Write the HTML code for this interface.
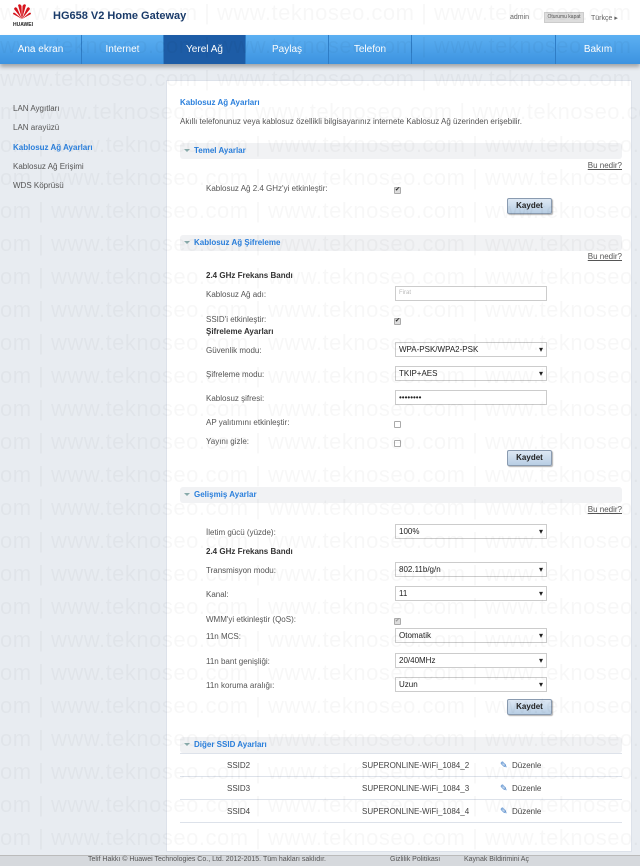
<!DOCTYPE html><html><head><meta charset="utf-8"><style>
*{margin:0;padding:0;box-sizing:border-box}
html{width:640px;height:866px;overflow:hidden}
body{width:640px;height:866px;overflow:hidden;background:#e8ecf1;font-family:"Liberation Sans",sans-serif;font-size:8px;color:#444;position:relative}
.a{position:absolute;white-space:nowrap}
.wm{position:absolute;left:0;width:640px;font-size:22px;color:rgba(0,0,0,0.03);white-space:nowrap;letter-spacing:0.5px;z-index:50;pointer-events:none;overflow:hidden}
.nav{position:absolute;top:35px;left:0;width:640px;height:29px;background:linear-gradient(#5cb0f2,#3c93e0);box-shadow:0 3px 4px rgba(0,0,0,0.3)}
.nav div{position:absolute;top:0;height:29px;line-height:29px;text-align:center;color:#fff;font-size:10px;border-right:1px solid #2f7dc6}
.side{color:#555;font-size:8px}
.sec{position:absolute;left:180px;width:442px;height:16px;background:#f1f2f4;border-radius:3px;color:#2a7fdc;font-weight:bold;font-size:8px;line-height:16px;padding-left:4px}
.sec:before{content:"";display:inline-block;border-left:3px solid transparent;border-right:3px solid transparent;border-top:3px solid #8aa;margin-right:4px;vertical-align:1px}
.bn{position:absolute;right:18px;color:#555;text-decoration:underline;font-size:8px}
.lbl{position:absolute;left:206px;color:#555}
.b{position:absolute;left:206px;color:#333;font-weight:bold}
.cb{position:absolute;left:394px;width:7px;height:7px;background:#ddd;border:1px solid #aaa;border-radius:1px;font-size:6px;line-height:5px;text-align:center;color:#222}
.inp{position:absolute;left:395px;width:152px;height:15px;border:1px solid #ccc;background:#fff;font-size:8px;line-height:13px;padding-left:3px;color:#222}
.sel:after{content:"▾";position:absolute;right:3px;font-size:8px}
.btn{position:absolute;left:507px;width:45px;height:16px;background:linear-gradient(#dde8f4,#b8cee4);border:1px solid #8a9bb0;border-radius:2px;font-weight:bold;color:#222;font-size:8px;line-height:14px;text-align:center;box-shadow:1px 1px 1px rgba(0,0,0,0.3)}
.ln{position:absolute;left:180px;width:442px;height:1px;background:#dde2ea}
</style></head><body>
<div style="position:absolute;top:0;left:0;width:640px;height:35px;background:#fff"></div>
<svg class="a" style="left:12px;top:3px" width="20" height="18" viewBox="0 0 20 18"><g fill="#d8141c"><path d="M10 16 L6 2 Q8 0 9.5 3Z"/><path d="M10 16 L14 2 Q12 0 10.5 3Z"/><path d="M10 16 L2 6 Q3 3 5 5Z"/><path d="M10 16 L18 6 Q17 3 15 5Z"/><path d="M10 16 L1 11 Q1 9 3 10Z"/><path d="M10 16 L19 11 Q19 9 17 10Z"/></g></svg>
<div class="a" style="left:13px;top:22px;font-size:5px;font-weight:bold;color:#222">HUAWEI</div>
<div class="a" style="left:53px;top:10px;font-size:11px;font-weight:bold;color:#1a3b6a">HG658 V2 Home Gateway</div>
<div class="a" style="left:510px;top:14px;font-size:7px;color:#666">admin</div>
<div class="a" style="left:544px;top:12px;width:40px;height:11px;background:#ddd;border:1px solid #ccc;font-size:5px;line-height:9px;text-align:center;color:#555">Oturumu kapat</div>
<div class="a" style="left:591px;top:14px;font-size:7px;color:#666">Türkçe ▸</div>
<div class="nav">
<div style="left:0;width:82px">Ana ekran</div>
<div style="left:82px;width:82px">Internet</div>
<div style="left:164px;width:82px;background:#1d5ca6">Yerel Ağ</div>
<div style="left:246px;width:83px">Paylaş</div>
<div style="left:329px;width:83px">Telefon</div>
<div style="left:412px;width:144px"></div>
<div style="left:556px;width:84px;border:none">Bakım</div>
</div>
<div class="a side" style="left:13px;top:104px">LAN Aygıtları</div>
<div class="a side" style="left:13px;top:123px">LAN arayüzü</div>
<div class="a side" style="left:13px;top:143px;color:#2a7fdc;font-weight:bold">Kablosuz Ağ Ayarları</div>
<div class="a side" style="left:13px;top:162px">Kablosuz Ağ Erişimi</div>
<div class="a side" style="left:13px;top:181px">WDS Köprüsü</div>
<div style="position:absolute;left:166px;top:80px;width:466px;height:772px;background:#fff;border:1px solid #dde2ea"></div>
<div class="a" style="left:180px;top:98px;color:#2a7fdc;font-weight:bold">Kablosuz Ağ Ayarları</div>
<div class="a" style="left:180px;top:117px;color:#555">Akıllı telefonunuz veya kablosuz özellikli bilgisayarınız internete Kablosuz Ağ üzerinden erişebilir.</div>
<div class="sec" style="top:143px">Temel Ayarlar</div>
<div class="a bn" style="top:161px">Bu nedir?</div>
<div class="lbl" style="top:184px">Kablosuz Ağ 2.4 GHz'yi etkinleştir:</div>
<div class="cb" style="top:187px">✔</div>
<div class="btn" style="top:198px">Kaydet</div>
<div class="sec" style="top:235px">Kablosuz Ağ Şifreleme</div>
<div class="a bn" style="top:252px">Bu nedir?</div>
<div class="b" style="top:271px">2.4 GHz Frekans Bandı</div>
<div class="lbl" style="top:290px">Kablosuz Ağ adı:</div>
<div class="inp" style="top:286px;color:#bbb;font-size:6px">Firat</div>
<div class="lbl" style="top:315px">SSID'i etkinleştir:</div>
<div class="cb" style="top:318px">✔</div>
<div class="b" style="top:327px">Şifreleme Ayarları</div>
<div class="lbl" style="top:346px">Güvenlik modu:</div>
<div class="inp sel" style="top:342px">WPA-PSK/WPA2-PSK</div>
<div class="lbl" style="top:370px">Şifreleme modu:</div>
<div class="inp sel" style="top:366px">TKIP+AES</div>
<div class="lbl" style="top:394px">Kablosuz şifresi:</div>
<div class="inp" style="top:390px">••••••••</div>
<div class="lbl" style="top:418px">AP yalıtımını etkinleştir:</div>
<div class="cb" style="top:421px;background:#fff"></div>
<div class="lbl" style="top:437px">Yayını gizle:</div>
<div class="cb" style="top:440px;background:#fff"></div>
<div class="btn" style="top:450px">Kaydet</div>
<div class="sec" style="top:487px">Gelişmiş Ayarlar</div>
<div class="a bn" style="top:505px">Bu nedir?</div>
<div class="lbl" style="top:528px">İletim gücü (yüzde):</div>
<div class="inp sel" style="top:524px">100%</div>
<div class="b" style="top:547px">2.4 GHz Frekans Bandı</div>
<div class="lbl" style="top:566px">Transmisyon modu:</div>
<div class="inp sel" style="top:562px">802.11b/g/n</div>
<div class="lbl" style="top:590px">Kanal:</div>
<div class="inp sel" style="top:586px">11</div>
<div class="lbl" style="top:615px">WMM'yi etkinleştir (QoS):</div>
<div class="cb" style="top:618px;color:#999">✔</div>
<div class="lbl" style="top:632px">11n MCS:</div>
<div class="inp sel" style="top:628px">Otomatik</div>
<div class="lbl" style="top:657px">11n bant genişliği:</div>
<div class="inp sel" style="top:653px">20/40MHz</div>
<div class="lbl" style="top:681px">11n koruma aralığı:</div>
<div class="inp sel" style="top:677px">Uzun</div>
<div class="btn" style="top:699px">Kaydet</div>
<div class="sec" style="top:737px">Diğer SSID Ayarları</div>
<div class="ln" style="top:753px"></div>
<div class="a" style="left:227px;top:761px">SSID2</div><div class="a" style="left:362px;top:761px">SUPERONLINE-WiFi_1084_2</div><div class="a" style="left:500px;top:760px;color:#2a6fc0;font-size:9px">✎</div><div class="a" style="left:512px;top:761px">Düzenle</div>
<div class="ln" style="top:776px"></div>
<div class="a" style="left:227px;top:784px">SSID3</div><div class="a" style="left:362px;top:784px">SUPERONLINE-WiFi_1084_3</div><div class="a" style="left:500px;top:783px;color:#2a6fc0;font-size:9px">✎</div><div class="a" style="left:512px;top:784px">Düzenle</div>
<div class="ln" style="top:799px"></div>
<div class="a" style="left:227px;top:807px">SSID4</div><div class="a" style="left:362px;top:807px">SUPERONLINE-WiFi_1084_4</div><div class="a" style="left:500px;top:806px;color:#2a6fc0;font-size:9px">✎</div><div class="a" style="left:512px;top:807px">Düzenle</div>
<div class="ln" style="top:822px"></div>
<div style="position:absolute;left:0;top:855px;width:640px;height:11px;background:#d6d9dd;border-top:1px solid #bbb"></div>
<div class="a" style="left:88px;top:856px;font-size:7px;color:#555">Telif Hakkı © Huawei Technologies Co., Ltd. 2012-2015. Tüm hakları saklıdır.</div>
<div class="a" style="left:390px;top:856px;font-size:7px;color:#555">Gizlilik Politikası</div>
<div class="a" style="left:464px;top:856px;font-size:7px;color:#555">Kaynak Bildirimini Aç</div>
<div class="wm" style="top:0">www.teknoseo.com | www.teknoseo.com | www.teknoseo.com</div>
<div class="wm" style="top:33px">www.teknoseo.com | www.teknoseo.com | www.teknoseo.com</div>
<div class="wm" style="top:66px">www.teknoseo.com | www.teknoseo.com | www.teknoseo.com</div>
<div class="wm" style="top:99px">m | www.teknoseo.com | www.teknoseo.com | www.teknoseo.com</div>
<div class="wm" style="top:132px">om | www.teknoseo.com | www.teknoseo.com | www.teknoseo.com</div>
<div class="wm" style="top:165px">om | www.teknoseo.com | www.teknoseo.com | www.teknoseo.com</div>
<div class="wm" style="top:198px">om | www.teknoseo.com | www.teknoseo.com | www.teknoseo.com</div>
<div class="wm" style="top:231px">om | www.teknoseo.com | www.teknoseo.com | www.teknoseo.com</div>
<div class="wm" style="top:264px">om | www.teknoseo.com | www.teknoseo.com | www.teknoseo.com</div>
<div class="wm" style="top:297px">om | www.teknoseo.com | www.teknoseo.com | www.teknoseo.com</div>
<div class="wm" style="top:330px">om | www.teknoseo.com | www.teknoseo.com | www.teknoseo.com</div>
<div class="wm" style="top:363px">om | www.teknoseo.com | www.teknoseo.com | www.teknoseo.com</div>
<div class="wm" style="top:396px">om | www.teknoseo.com | www.teknoseo.com | www.teknoseo.com</div>
<div class="wm" style="top:429px">om | www.teknoseo.com | www.teknoseo.com | www.teknoseo.com</div>
<div class="wm" style="top:462px">om | www.teknoseo.com | www.teknoseo.com | www.teknoseo.com</div>
<div class="wm" style="top:495px">om | www.teknoseo.com | www.teknoseo.com | www.teknoseo.com</div>
<div class="wm" style="top:528px">om | www.teknoseo.com | www.teknoseo.com | www.teknoseo.com</div>
<div class="wm" style="top:561px">om | www.teknoseo.com | www.teknoseo.com | www.teknoseo.com</div>
<div class="wm" style="top:594px">om | www.teknoseo.com | www.teknoseo.com | www.teknoseo.com</div>
<div class="wm" style="top:627px">om | www.teknoseo.com | www.teknoseo.com | www.teknoseo.com</div>
<div class="wm" style="top:660px">om | www.teknoseo.com | www.teknoseo.com | www.teknoseo.com</div>
<div class="wm" style="top:693px">om | www.teknoseo.com | www.teknoseo.com | www.teknoseo.com</div>
<div class="wm" style="top:726px">om | www.teknoseo.com | www.teknoseo.com | www.teknoseo.com</div>
<div class="wm" style="top:759px">om | www.teknoseo.com | www.teknoseo.com | www.teknoseo.com</div>
<div class="wm" style="top:792px">om | www.teknoseo.com | www.teknoseo.com | www.teknoseo.com</div>
<div class="wm" style="top:825px">om | www.teknoseo.com | www.teknoseo.com | www.teknoseo.com</div>
</body></html>
